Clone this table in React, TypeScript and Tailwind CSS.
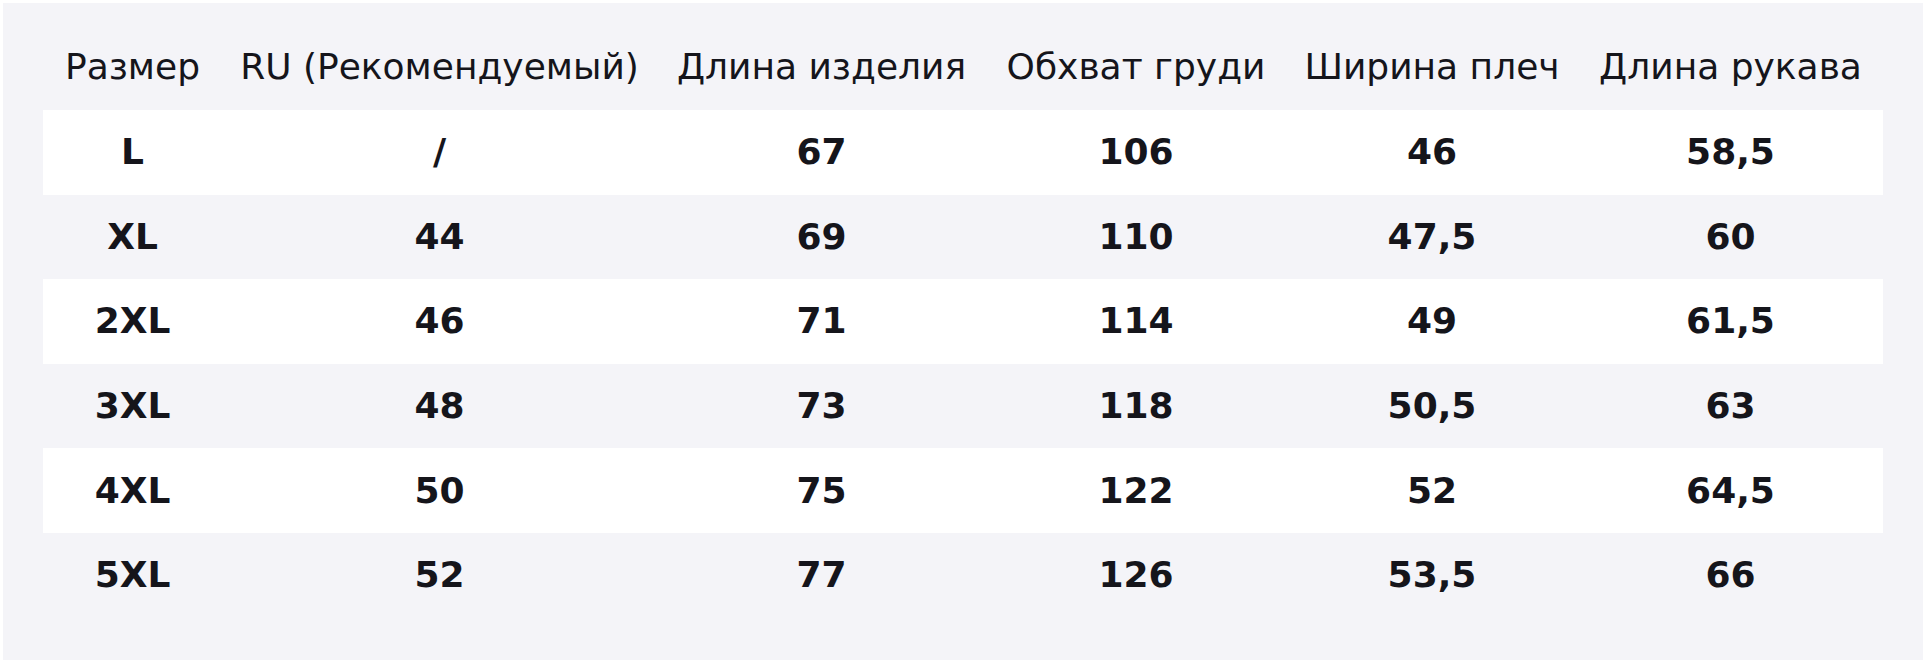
const headers = [
  "Размер",
  "RU (Рекомендуемый)",
  "Длина изделия",
  "Обхват груди",
  "Ширина плеч",
  "Длина рукава",
];

const rows: string[][] = [
  ["L", "/", "67", "106", "46", "58,5"],
  ["XL", "44", "69", "110", "47,5", "60"],
  ["2XL", "46", "71", "114", "49", "61,5"],
  ["3XL", "48", "73", "118", "50,5", "63"],
  ["4XL", "50", "75", "122", "52", "64,5"],
  ["5XL", "52", "77", "126", "53,5", "66"],
];

const cols =
  "grid grid-cols-[179px_435px_329px_300px_292px_305px]";

export default function App() {
  return (
    <div
      className="bg-white p-[3px] text-[#15151b]"
      style={{ fontFamily: '"DejaVu Sans", "Noto Sans", sans-serif' }}
    >
      <div className="bg-[#f4f4f8] px-[40px] pt-[40px] pb-[42px]">
        <div className={`${cols} h-[67px] items-start pt-[3px]`}>
          {headers.map((h) => (
            <div
              key={h}
              className="text-center text-[36px] leading-[42px] whitespace-nowrap"
            >
              {h}
            </div>
          ))}
        </div>

        {rows.map((r, i) => (
          <div
            key={r[0]}
            className={`${cols} h-[84.6px] items-center ${
              i % 2 === 0 ? "bg-white" : "bg-[#f4f4f8]"
            }`}
          >
            {r.map((v, j) => (
              <div
                key={j}
                className="text-center text-[36px] leading-[42px] font-bold"
              >
                {v}
              </div>
            ))}
          </div>
        ))}
      </div>
    </div>
  );
}
